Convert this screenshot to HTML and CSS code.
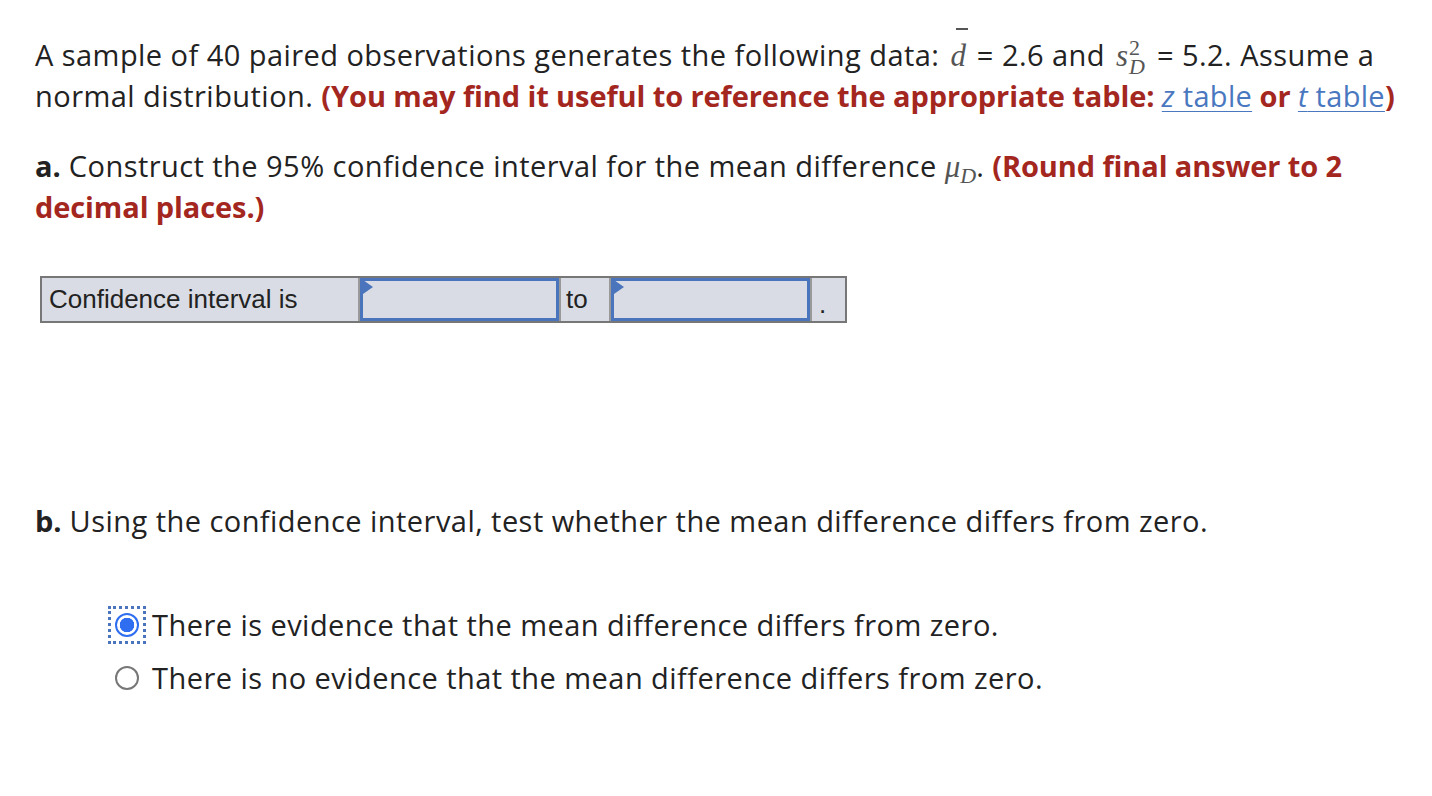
FILE: index.html
```html
<!DOCTYPE html>
<html>
<head>
<meta charset="utf-8">
<link rel="stylesheet" href="styles.css">
</head>
<body>
<div class="page">
  <p class="para intro">A sample of 40 paired observations generates the following data: <span class="math dbar">d</span> = 2.6 and <span class="math sd">s<span class="supsub"><span class="sup">2</span><span class="sub">D</span></span></span> = 5.2. Assume a normal distribution. <span class="red">(You may find it useful to reference the appropriate table: <a class="lnk" href="#"><i>z</i> table</a> or <a class="lnk" href="#"><i>t</i> table</a>)</span></p>

  <p class="para parta"><b>a.</b> Construct the 95% confidence interval for the mean difference <span class="math">μ<sub class="msub">D</sub></span>. <span class="red">(Round final answer to 2 decimal places.)</span></p>

  <div class="ci">
    <div class="cell label">Confidence interval is</div>
    <div class="cell input"><span class="flag"></span></div>
    <div class="cell to">to</div>
    <div class="cell input input2"><span class="flag"></span></div>
    <div class="cell dot">.</div>
  </div>

  <p class="para partb"><b>b.</b> Using the confidence interval, test whether the mean difference differs from zero.</p>

  <div class="options">
    <div class="opt">
      <span class="focus"><span class="radio checked"></span></span>
      <span class="opttext">There is evidence that the mean difference differs from zero.</span>
    </div>
    <div class="opt">
      <span class="nofocus"><span class="radio"></span></span>
      <span class="opttext">There is no evidence that the mean difference differs from zero.</span>
    </div>
  </div>
</div>
</body>
</html>
```
FILE: styles.css
```css
html, body {
  margin: 0;
  padding: 0;
  background: #fff;
}
.page {
  padding: 35px 0 0 35px;
  width: 1375px;
  font-family: "Open Sans", "Noto Sans", sans-serif;
  color: #222;
  font-size: 29px;
  letter-spacing: 0.45px;
}
.para {
  margin: 0;
  line-height: 40px;
}
.parta {
  margin-top: 30px;
}
b {
  font-weight: 700;
  letter-spacing: 0;
}
.red {
  color: #a4271f;
  font-weight: 700;
  letter-spacing: -0.1px;
}
.lnk {
  color: #4a78c0;
  font-weight: 400;
  letter-spacing: 0.3px;
  text-decoration: underline;
  text-underline-offset: 4px;
  text-decoration-thickness: 1px;
}
.math {
  font-family: "Liberation Serif", "DejaVu Serif", serif;
  font-style: italic;
  color: #555;
  font-size: 31px;
  letter-spacing: 0;
}
.dbar {
  position: relative;
  display: inline-block;
  margin-left: 3px;
  margin-right: 3px;
}
.dbar::before {
  content: "";
  position: absolute;
  left: 6px;
  top: -8px;
  width: 12px;
  height: 2px;
  background: #555;
}
.sd {
  margin-left: 3px;
}
.supsub {
  display: inline-block;
  vertical-align: -8px;
  line-height: 19px;
  font-size: 22px;
  margin-left: 1px;
  margin-right: 4px;
}
.sup, .sub {
  display: block;
}
.sup {
  font-style: normal;
}
.msub {
  font-size: 22px;
  vertical-align: -6px;
  line-height: 0;
}
.ci {
  display: flex;
  margin: 49px 0 0 5px;
  width: 807px;
  height: 47px;
  border: 2px solid #777;
  box-sizing: border-box;
  background: #d9dce4;
  font-family: "Liberation Sans", Arial, sans-serif;
  font-size: 26px;
  letter-spacing: 0;
  color: #222;
}
.cell {
  display: flex;
  align-items: center;
  box-sizing: border-box;
}
.label {
  width: 318px;
  padding-left: 7px;
  border-right: 2px solid #999;
}
.input {
  position: relative;
  width: 199px;
  border: 3px solid #4a74bb;
  background: #d9dce4;
}
.to {
  width: 52px;
  padding-left: 5px;
  border-left: 2px solid #999;
  border-right: 2px solid #999;
}
.input2 {
  width: 199px;
}
.dot {
  flex: 1;
  padding-left: 7px;
  padding-top: 10px;
  border-left: 2px solid #999;
}
.flag {
  position: absolute;
  left: 0;
  top: -1px;
  width: 0;
  height: 0;
  border-top: 7px solid transparent;
  border-bottom: 7px solid transparent;
  border-left: 10px solid #4a74bb;
}
.partb {
  margin-top: 178px;
}
.options {
  margin-top: 57px;
  padding-left: 73px;
}
.opt {
  display: flex;
  align-items: center;
  height: 53px;
}
.focus, .nofocus {
  width: 38px;
  height: 38px;
  box-sizing: border-box;
  display: flex;
  align-items: center;
  justify-content: center;
  margin-right: 6px;
}
.focus {
  border: 3px dotted #4a74bb;
}
.radio {
  width: 24px;
  height: 24px;
  border-radius: 50%;
  border: 2px solid #777;
  box-sizing: border-box;
  background: #fff;
  display: block;
}
.radio.checked {
  border: 2px solid #2f6ef0;
  background: radial-gradient(circle, #2f6ef0 0 7px, #fff 7.5px);
}
.opttext {
  line-height: 40px;
}
```
